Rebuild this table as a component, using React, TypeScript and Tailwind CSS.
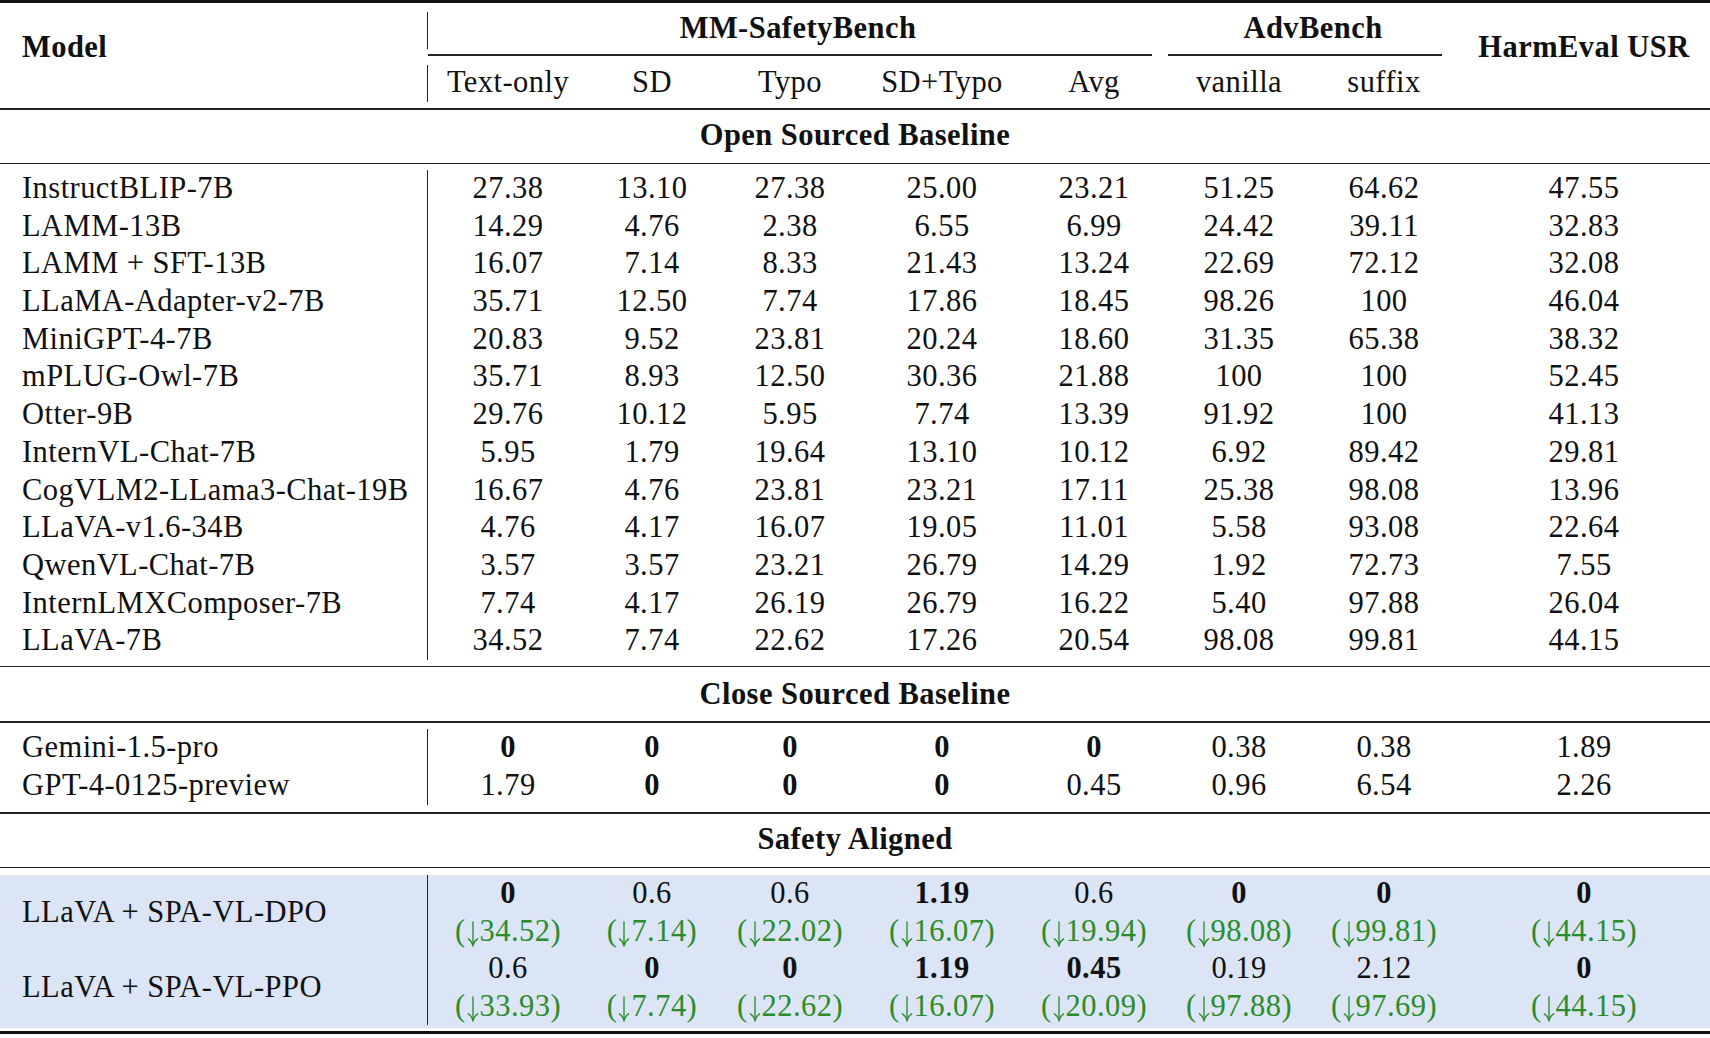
import React from "react";

type Cell = { v: string; b?: boolean };

const COLS =
  "grid grid-cols-[428px_160px_128px_148px_156px_148px_142px_148px_252px]";

const open: [string, string[]][] = [
  ["InstructBLIP-7B", ["27.38", "13.10", "27.38", "25.00", "23.21", "51.25", "64.62", "47.55"]],
  ["LAMM-13B", ["14.29", "4.76", "2.38", "6.55", "6.99", "24.42", "39.11", "32.83"]],
  ["LAMM + SFT-13B", ["16.07", "7.14", "8.33", "21.43", "13.24", "22.69", "72.12", "32.08"]],
  ["LLaMA-Adapter-v2-7B", ["35.71", "12.50", "7.74", "17.86", "18.45", "98.26", "100", "46.04"]],
  ["MiniGPT-4-7B", ["20.83", "9.52", "23.81", "20.24", "18.60", "31.35", "65.38", "38.32"]],
  ["mPLUG-Owl-7B", ["35.71", "8.93", "12.50", "30.36", "21.88", "100", "100", "52.45"]],
  ["Otter-9B", ["29.76", "10.12", "5.95", "7.74", "13.39", "91.92", "100", "41.13"]],
  ["InternVL-Chat-7B", ["5.95", "1.79", "19.64", "13.10", "10.12", "6.92", "89.42", "29.81"]],
  ["CogVLM2-LLama3-Chat-19B", ["16.67", "4.76", "23.81", "23.21", "17.11", "25.38", "98.08", "13.96"]],
  ["LLaVA-v1.6-34B", ["4.76", "4.17", "16.07", "19.05", "11.01", "5.58", "93.08", "22.64"]],
  ["QwenVL-Chat-7B", ["3.57", "3.57", "23.21", "26.79", "14.29", "1.92", "72.73", "7.55"]],
  ["InternLMXComposer-7B", ["7.74", "4.17", "26.19", "26.79", "16.22", "5.40", "97.88", "26.04"]],
  ["LLaVA-7B", ["34.52", "7.74", "22.62", "17.26", "20.54", "98.08", "99.81", "44.15"]],
];

const close: [string, Cell[]][] = [
  [
    "Gemini-1.5-pro",
    [
      { v: "0", b: true },
      { v: "0", b: true },
      { v: "0", b: true },
      { v: "0", b: true },
      { v: "0", b: true },
      { v: "0.38" },
      { v: "0.38" },
      { v: "1.89" },
    ],
  ],
  [
    "GPT-4-0125-preview",
    [
      { v: "1.79" },
      { v: "0", b: true },
      { v: "0", b: true },
      { v: "0", b: true },
      { v: "0.45" },
      { v: "0.96" },
      { v: "6.54" },
      { v: "2.26" },
    ],
  ],
];

const aligned: [string, Cell[], string[]][] = [
  [
    "LLaVA + SPA-VL-DPO",
    [
      { v: "0", b: true },
      { v: "0.6" },
      { v: "0.6" },
      { v: "1.19", b: true },
      { v: "0.6" },
      { v: "0", b: true },
      { v: "0", b: true },
      { v: "0", b: true },
    ],
    ["34.52", "7.14", "22.02", "16.07", "19.94", "98.08", "99.81", "44.15"],
  ],
  [
    "LLaVA + SPA-VL-PPO",
    [
      { v: "0.6" },
      { v: "0", b: true },
      { v: "0", b: true },
      { v: "1.19", b: true },
      { v: "0.45", b: true },
      { v: "0.19" },
      { v: "2.12" },
      { v: "0", b: true },
    ],
    ["33.93", "7.74", "22.62", "16.07", "20.09", "97.88", "97.69", "44.15"],
  ],
];

function Rule({ thick }: { thick?: boolean }) {
  return <div className={thick ? "h-[3px] w-full bg-[#111]" : "h-[1.5px] w-full bg-[#222]"} />;
}

function Section({ title, tall }: { title: string; tall?: boolean }) {
  return (
    <div className={`flex items-center justify-center font-bold ${tall ? "h-[54px]" : "h-[53px]"}`}>
      {title}
    </div>
  );
}

function DownArrow() {
  return (
    <svg
      viewBox="0 0 14 28"
      className="inline-block h-[27px] w-[14px] align-[-6px]"
      fill="none"
      stroke="currentColor"
      strokeWidth="1.4"
      strokeLinecap="round"
    >
      <path d="M7 2 V26" />
      <path d="M2.2 19.5 Q5.5 21.5 7 26.5 Q8.5 21.5 11.8 19.5" />
    </svg>
  );
}

function Row({ name, cells }: { name: string; cells: Cell[] }) {
  return (
    <div className={`${COLS} h-[37.7px] leading-[37.7px]`}>
      <div className="border-r-[1.5px] border-[#222] pl-[22px] whitespace-nowrap">{name}</div>
      {cells.map((c, i) => (
        <div key={i} className={`text-center ${c.b ? "font-bold" : ""}`}>
          {c.v}
        </div>
      ))}
    </div>
  );
}

export default function App() {
  return (
    <div className="w-[1710px] h-[1038px] bg-white text-[#111] text-[30.5px] tracking-[0.45px] font-['Liberation_Serif','Times_New_Roman',serif] overflow-hidden">
      <Rule thick />
      {/* Header */}
      <div className="flex h-[105px]">
        <div className="flex w-[428px]">
          <div className="flex-1 pl-[22px] pt-[26px] font-bold leading-[37.7px]">Model</div>
          <div className="flex w-[1.5px] flex-col">
            <div className="mt-[9px] h-[37px] bg-[#222]" />
            <div className="mt-[16px] h-[37px] bg-[#222]" />
          </div>
        </div>
        <div className="flex w-[1030px] flex-col">
          <div className="flex h-[51px] items-center pt-[1px] font-bold">
            <div className="w-[740px] text-center">MM-SafetyBench</div>
            <div className="w-[290px] text-center">AdvBench</div>
          </div>
          <div className="flex h-[2px]">
            <div className="h-[1.5px] w-[724px] bg-[#222]" />
            <div className="ml-[16px] h-[1.5px] w-[274px] bg-[#222]" />
          </div>
          <div className="grid h-[52px] grid-cols-[160px_128px_148px_156px_148px_142px_148px] items-center pt-[1px] text-center">
            <div>Text-only</div>
            <div>SD</div>
            <div>Typo</div>
            <div>SD+Typo</div>
            <div>Avg</div>
            <div>vanilla</div>
            <div>suffix</div>
          </div>
        </div>
        <div className="w-[252px] pt-[26px] text-center font-bold leading-[37.7px]">HarmEval USR</div>
      </div>
      <Rule />
      <Section title="Open Sourced Baseline" />
      <Rule />
      <div className="py-[6px]">
        {open.map(([n, vals]) => (
          <Row key={n} name={n} cells={vals.map((v) => ({ v }))} />
        ))}
      </div>
      <Rule />
      <Section title="Close Sourced Baseline" tall />
      <Rule />
      <div className="pt-[6.5px] pb-[7.5px]">
        {close.map(([n, c]) => (
          <Row key={n} name={n} cells={c} />
        ))}
      </div>
      <Rule />
      <Section title="Safety Aligned" />
      <Rule />
      <div className="mt-[7px] mb-[3px] bg-[#dbe5f6] pb-[3px]">
        {aligned.map(([n, c, d]) => (
          <div key={n} className={`${COLS} leading-[37.5px]`}>
            <div className="flex items-center border-r-[1.5px] border-[#222] pl-[22px] whitespace-nowrap">
              {n}
            </div>
            {c.map((cell, i) => (
              <div key={i} className="flex flex-col text-center">
                <div className={`h-[37.5px] ${cell.b ? "font-bold" : ""}`}>{cell.v}</div>
                <div className="h-[37.5px] text-[#2b8c2b]">
                  (<DownArrow />
                  {d[i]})
                </div>
              </div>
            ))}
          </div>
        ))}
      </div>
      <Rule thick />
    </div>
  );
}
